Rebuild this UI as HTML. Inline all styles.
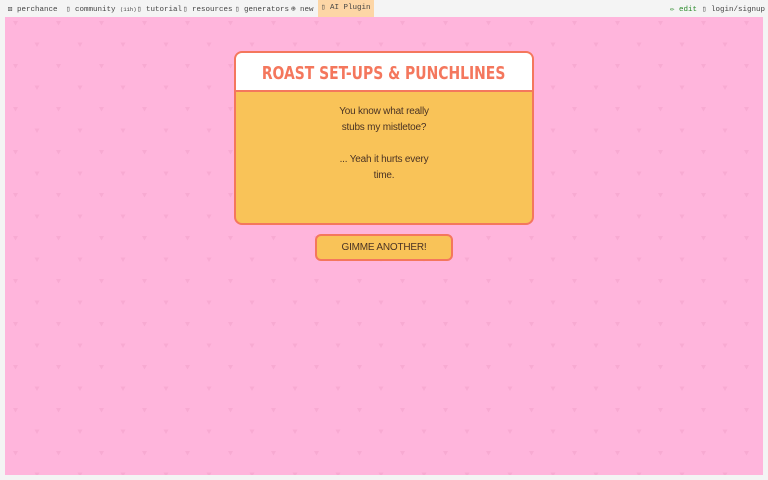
<!DOCTYPE html>
<html><head><meta charset="utf-8"><style>
body{margin:0;width:768px;height:480px;background:#f4f4f4;font-family:"Liberation Sans",sans-serif;overflow:hidden;position:relative}
.nav{position:absolute;top:0;left:0;right:0;height:17px;font:7.5px "Liberation Mono",monospace;color:#444;white-space:nowrap}
.nav span{position:absolute;top:4px;white-space:nowrap}
.main{position:absolute;left:5px;top:17px;width:758px;height:458px;background:#ffb5dc}
.card{position:absolute;left:234px;top:51px;width:296px;height:170px;border:2px solid #f4775d;border-radius:8px;background:#f9c358;overflow:hidden}
.head{height:37px;background:#fff;border-bottom:2px solid #f4775d;text-align:center;color:#f4775d;font:bold 18px "DejaVu Sans Condensed",sans-serif;line-height:42px}
.head b{display:inline-block;transform:scaleX(0.86)}
.body{text-align:center;font:10px "Liberation Sans",sans-serif;letter-spacing:-0.2px;color:#4a3324;line-height:16px;padding-top:12px}
.btn{position:absolute;left:315px;top:234px;width:134px;height:23px;border:2px solid #f4775d;border-radius:6px;background:#f9c358;text-align:center;font:10px "Liberation Sans",sans-serif;letter-spacing:-0.2px;color:#4a3324;line-height:24px}
</style></head><body>
<div class="nav">
<span style="left:8px">⚄ perchance</span>
<span style="left:66px">▯ community <small style="font-size:5.5px">(11h)</small></span>
<span style="left:137px">▯ tutorial</span>
<span style="left:183px">▯ resources</span>
<span style="left:235px">▯ generators</span>
<span style="left:291px">⊕ new</span>
<span style="left:318px;top:0;height:17px;line-height:17px;padding:0 3px;background:#fdd6a6">▯ AI Plugin</span>
<span style="left:670px;color:#2a8a2a">✏ edit</span>
<span style="left:702px">▯ login/signup</span>
</div>
<div class="main">
<svg width="758" height="458" style="position:absolute;left:0;top:0">
<defs><pattern id="p" width="43" height="43" patternUnits="userSpaceOnUse" x="-5" y="-17">
<path d="M13 21 l5 0 l-2.5 4.5z M34.5 42.5 l5 0 l-2.5 4.5z M34.5 -0.5 l5 0 l-2.5 4.5z" fill="#f8aad2"/></pattern></defs>
<rect width="758" height="458" fill="url(#p)"/></svg>
</div>
<div class="card"><div class="head"><b>ROAST SET-UPS &amp; PUNCHLINES</b></div>
<div class="body">You know what really<br>stubs my mistletoe?<br><br>... Yeah it hurts every<br>time.</div></div>
<div class="btn">GIMME ANOTHER!</div>
</body></html>
